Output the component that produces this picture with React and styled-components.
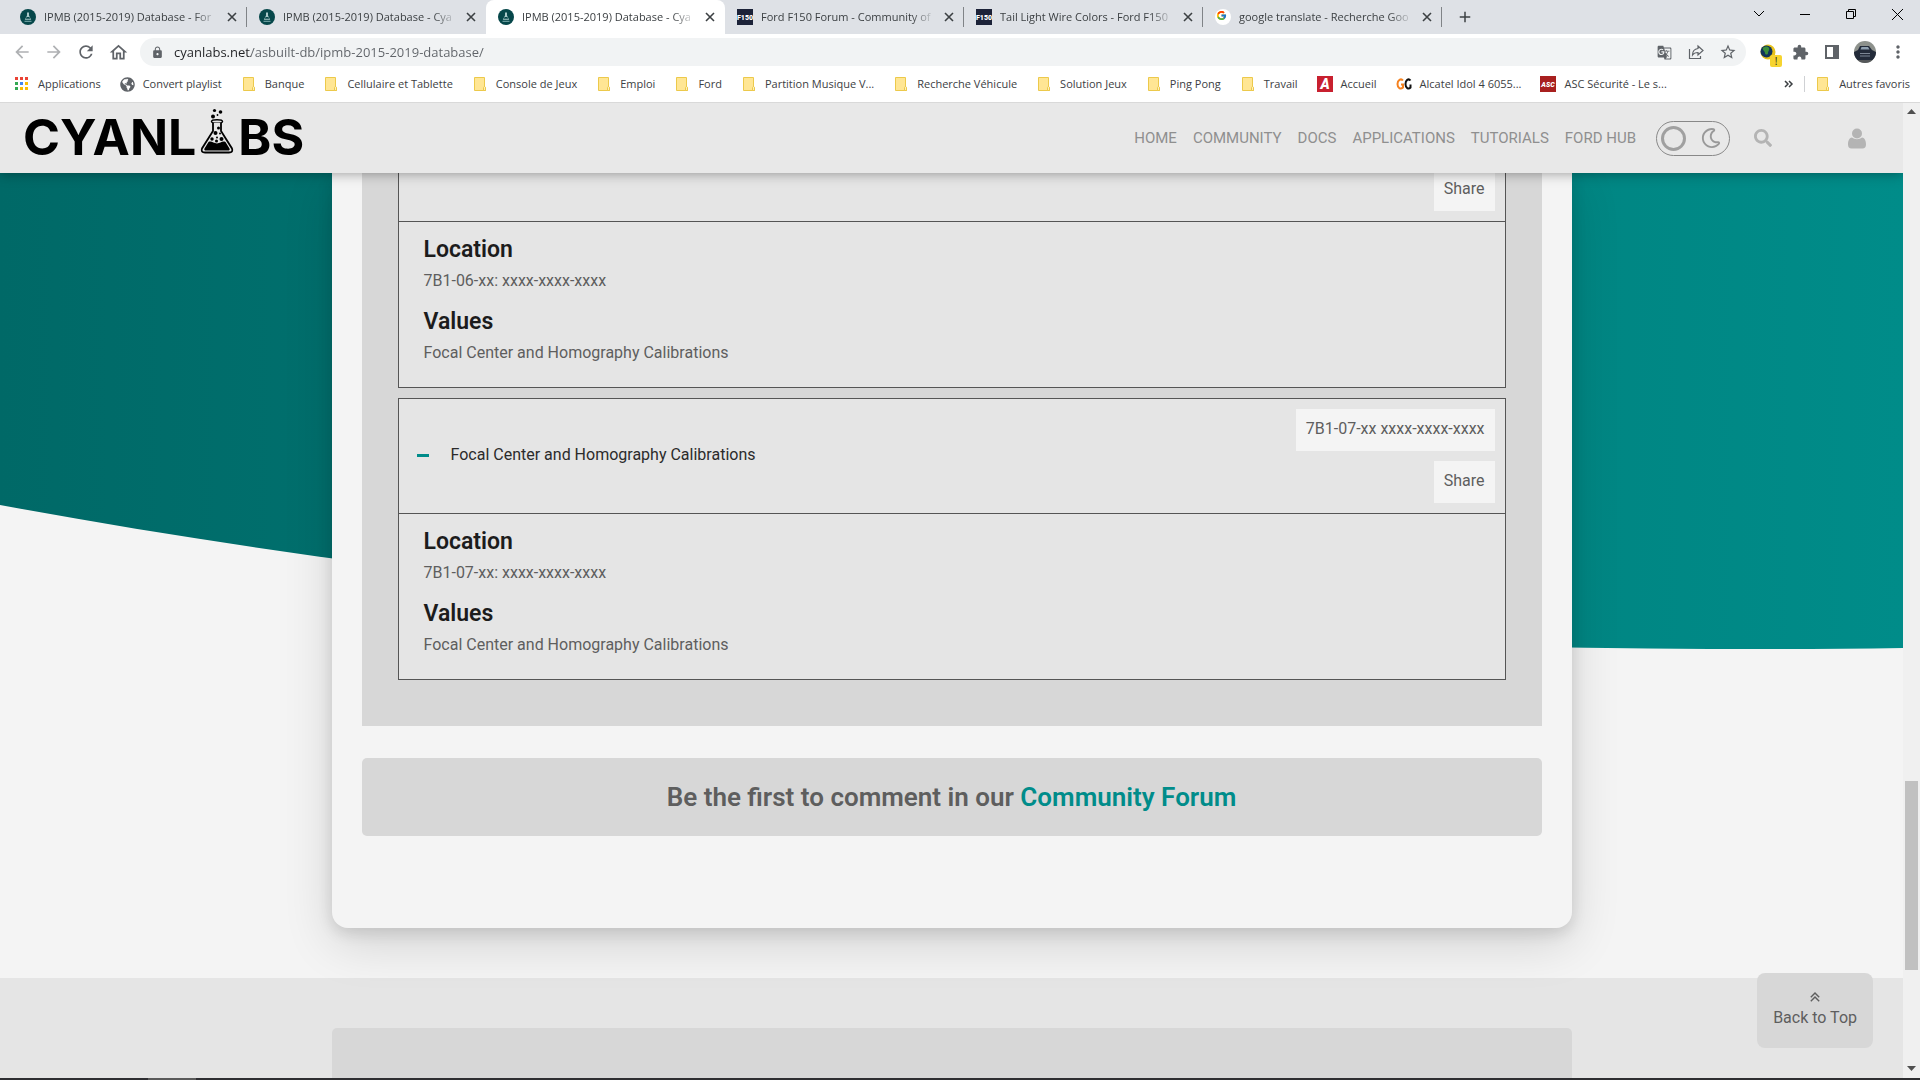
import React from "react";
import styled, { createGlobalStyle } from "styled-components";
import {
  MdArrowBack,
  MdArrowForward,
  MdRefresh,
  MdOutlineHome,
  MdLock,
  MdGTranslate,
  MdStarBorder,
  MdExtension,
  MdMoreVert,
  MdAdd,
} from "react-icons/md";
import { FaSearch, FaRegMoon, FaGlobeAmericas } from "react-icons/fa";
import { FcGoogle } from "react-icons/fc";

const GlobalStyle = createGlobalStyle`
  * {
    box-sizing: border-box;
  }

  body {
    margin: 0;
    font-family: Roboto, "Liberation Sans", sans-serif;
    font-size: 16px;
    line-height: 26px;
    color: #5e5e5e;
    background: #f4f4f4;
  }

  button {
    font: inherit;
    color: inherit;
    border: 0;
    padding: 0;
    background: none;
    cursor: pointer;
  }

  a {
    color: inherit;
    text-decoration: none;
  }

  svg {
    display: block;
    flex: none;
  }
`;

const Window = styled.div`
  display: flex;
  flex-direction: column;
  height: 100vh;
  overflow: hidden;
`;

/* browser chrome */

const Chrome = styled.div`
  font-family: "Segoe UI", "Open Sans", "Noto Sans", sans-serif;
  font-size: 11px;
  line-height: 16px;
  color: #3c4043;
  background: #fff;
  border-bottom: 1px solid #d9d9d9;
`;

const TabStrip = styled.div`
  display: flex;
  align-items: stretch;
  height: 34px;
  padding-left: 8px;
  background: #dee1e6;
`;

const TabItem = styled.div`
  display: flex;
  align-items: center;
  gap: 8px;
  flex: 0 1 239px;
  min-width: 0;
  padding: 0 9px 0 12px;
  border-radius: 8px 8px 0 0;
  background: ${(props) => (props.$active ? "#fff" : "transparent")};
`;

const TabTitle = styled.a`
  flex: 1;
  min-width: 0;
  overflow: hidden;
  white-space: nowrap;
  mask-image: linear-gradient(to left, transparent, #000 24px);
`;

const TabDivider = styled.span`
  align-self: center;
  width: 1px;
  height: 20px;
  margin-left: -1px;
  background: ${(props) => (props.$hidden ? "transparent" : "#808387")};
`;

const NewTab = styled.button`
  width: 46px;
  display: flex;
  align-items: center;
  justify-content: center;
`;

const WindowControls = styled.div`
  display: flex;
  margin-left: auto;
  padding-bottom: 6px;
`;

const WindowButton = styled.button`
  display: flex;
  align-items: center;
  justify-content: center;
  width: 46px;
  color: #000;
`;

const Toolbar = styled.div`
  display: flex;
  align-items: center;
  gap: 12px;
  padding: 4px 12px;
  color: #5f6368;
`;

const ToolButton = styled.button`
  display: flex;
  align-items: center;
  justify-content: center;
  position: relative;
  width: 20px;
  height: 20px;
  opacity: ${(props) => (props.$dim ? 0.5 : 1)};
`;

const AddressBar = styled.label`
  display: flex;
  align-items: center;
  gap: 10px;
  flex: 1;
  height: 28px;
  padding: 0 8px 0 11px;
  border-radius: 14px;
  background: #f1f3f4;
`;

const AddressActions = styled.div`
  display: flex;
  gap: 12px;
`;

const AddressInput = styled.input`
  flex: 1;
  min-width: 0;
  border: 0;
  padding: 0;
  outline: 0;
  font-family: inherit;
  font-size: 13px;
  line-height: 20px;
  color: transparent;
  background: linear-gradient(to right, #202124 77px, #5f6368 77px);
  background-clip: text;
`;

const WarnBadge = styled.span`
  position: absolute;
  right: -4px;
  bottom: -5px;
  width: 12px;
  border-radius: 2px;
  font-size: 10px;
  line-height: 12px;
  text-align: center;
  color: #202124;
  background: #f6d42f;
`;

const Avatar = styled.span`
  width: 22px;
  height: 22px;
  border-radius: 50%;
  overflow: hidden;
`;

const BookmarkBar = styled.nav`
  display: flex;
  align-items: center;
  gap: 19px;
  height: 28px;
  margin-bottom: 4px;
  padding: 0 10px 0 14px;
  white-space: nowrap;
`;

const Bookmark = styled.a`
  display: flex;
  align-items: center;
  gap: 8px;
`;

const BookmarkMore = styled.div`
  display: flex;
  align-items: center;
  gap: 10px;
  margin-left: auto;
`;

const BookmarkRule = styled.span`
  width: 1px;
  height: 16px;
  background: #cfd1d4;
`;

/* page */

const Viewport = styled.div`
  display: flex;
  flex: 1;
  min-height: 0;
`;

const Page = styled.div`
  display: flex;
  flex-direction: column;
  flex: 1;
  min-width: 0;
  position: relative;
  overflow: hidden;
`;

const SiteHeader = styled.header`
  display: flex;
  align-items: center;
  flex: none;
  height: 70px;
  padding: 0 37px 0 23px;
  background: #e8e8e8;
  box-shadow: 0 0 12px rgba(0, 0, 0, 0.4);
  z-index: 3;
`;

const Logo = styled.a`
  display: flex;
  align-items: flex-end;
  margin: 0 auto 14px 0;
  height: 46px;
  font-family: Inter, sans-serif;
  font-size: 50px;
  font-weight: 700;
  line-height: 34px;
  color: #000;

  svg {
    margin: 0 4px;
  }
`;

const SiteNav = styled.nav`
  display: flex;
  gap: 16px;
  margin-right: 20px;
  font-size: 15px;
  text-transform: uppercase;
  color: #8f8f8f;
`;

const ThemeSwitch = styled.button`
  display: flex;
  align-items: center;
  justify-content: space-between;
  width: 74px;
  height: 35px;
  padding: 0 8px 0 4px;
  border: 1px solid #888;
  border-radius: 18px;
  color: #999;
`;

const ThemeKnob = styled.span`
  width: 25px;
  height: 25px;
  border: 3px solid #a0a0a0;
  border-radius: 50%;
`;

const HeaderIcon = styled.button`
  margin-left: ${(props) => props.$gap}px;
  color: #b4b4b4;
`;

const Scroller = styled.div`
  display: flex;
  flex-direction: column;
  flex: 1;
  min-height: 0;
  overflow: hidden;
  position: relative;
`;

const Hero = styled.svg`
  position: absolute;
  top: 0;
  left: 0;
  width: 100%;
  height: 476px;
`;

const Card = styled.main`
  position: relative;
  z-index: 1;
  flex: none;
  width: 1240px;
  max-width: 100%;
  margin: 0 auto 50px;
  padding: 0 30px 92px;
  border-radius: 0 0 16px 16px;
  background: #f4f4f4;
  box-shadow: 0 5px 15px rgba(0, 0, 0, 0.12), 0 15px 50px rgba(0, 0, 0, 0.14);
`;

const Panel = styled.section`
  display: flex;
  flex-direction: column;
  gap: 10px;
  padding: 0 36px 46px;
  background: #d7d7d7;
`;

const Entry = styled.article`
  border: 1px solid #555;
  border-top-width: ${(props) => (props.$scrolled ? 0 : 1)}px;
  background: #e5e5e5;
`;

const EntryHead = styled.div`
  display: flex;
  align-items: ${(props) => (props.$scrolled ? "flex-end" : "center")};
  justify-content: ${(props) => (props.$scrolled ? "flex-end" : "space-between")};
  height: ${(props) => (props.$scrolled ? 49 : 115)}px;
  padding: ${(props) => (props.$scrolled ? "0 10px 10px" : "10px")};
  border-bottom: 1px solid #555;
  overflow: hidden;
`;

const EntryToggle = styled.button`
  display: flex;
  align-items: center;
  gap: 22px;
  padding: 0 0 2px 8px;
  color: #2b2b2b;

  svg {
    color: #008c8a;
  }
`;

const Chips = styled.div`
  display: flex;
  flex-direction: column;
  align-items: flex-end;
  gap: 10px;
`;

const Chip = styled.button`
  padding: 7px 10px 9px;
  background: #f4f4f4;
`;

const EntryBody = styled.div`
  padding: 15px 25px 21px;
`;

const EntryHeading = styled.h4`
  margin: 0 0 5px;
  font-size: 23px;
  font-weight: 600;
  line-height: 26px;
  color: #1c1c1c;

  p + & {
    margin-top: 15px;
  }
`;

const EntryText = styled.p`
  margin: 0;
`;

const CommentBox = styled.section`
  margin-top: 32px;
  padding: 24px;
  border-radius: 5px;
  font-size: 26px;
  font-weight: 600;
  line-height: 30px;
  text-align: center;
  background: #d7d7d7;

  a {
    color: #008c8a;
  }
`;

const SiteFooter = styled.footer`
  flex: 1;
  padding-top: 50px;
  background: #e5e5e5;
`;

const FooterBox = styled.div`
  width: 1240px;
  max-width: 100%;
  height: 100%;
  margin: 0 auto;
  border-radius: 5px 5px 0 0;
  background: #d7d7d7;
`;

const BackToTop = styled.a`
  position: absolute;
  right: 30px;
  bottom: 30px;
  z-index: 2;
  display: flex;
  flex-direction: column;
  align-items: center;
  gap: 3px;
  padding: 19px 16px 17px;
  border-radius: 8px;
  background: #d7d7d7;
`;

const Scrollbar = styled.div`
  display: flex;
  flex-direction: column;
  align-items: center;
  width: 17px;
  padding: 6px 0;
  color: #505050;
  background: #f0f0f0;
`;

const ScrollSpace = styled.div`
  flex: ${(props) => props.$grow};
`;

const ScrollThumb = styled.div`
  flex: 189;
  width: 13px;
  background: #c1c1c1;
`;

const Taskbar = styled.div`
  flex: none;
  height: 2px;
  padding-left: 148px;
  background: #2e2e31;
`;

const TaskbarActive = styled.div`
  width: 48px;
  height: 2px;
  background: #5a5a5a;
`;

const CyanIcon = () => (
  <svg width="16" height="16" viewBox="0 0 16 16">
    <circle cx="8" cy="8" r="8" fill="#06474a" />
    <path d="M7 3.500h2v3l2.200 4.200H4.800L7 6.500z" fill="#a9c9c9" />
    <path d="M6.600 8h2.800l.8 1.700H5.800z" fill="#06474a" />
    <path d="M4.500 12.300h7" stroke="#7fb0b0" strokeWidth="1" />
  </svg>
);

const BadgeIcon = ({ bg, fg = "#fff", size = 8, italic, children }) => (
  <svg width="16" height="16" viewBox="0 0 16 16">
    <rect width="16" height="16" fill={bg} />
    <text
      x="8"
      y={8 + size * 0.36}
      textAnchor="middle"
      fill={fg}
      fontFamily="Roboto, sans-serif"
      fontWeight="900"
      fontStyle={italic ? "italic" : "normal"}
      fontSize={size}
    >
      {children}
    </text>
  </svg>
);

const GoogleIcon = () => (
  <svg width="16" height="16" viewBox="0 0 16 16">
    <circle cx="8" cy="8" r="8" fill="#fff" />
    <FcGoogle x="1" y="1" width="14" height="14" />
  </svg>
);

const FolderIcon = () => (
  <svg width="16" height="16" viewBox="0 0 16 16">
    <path d="M2.500 1.500h10v9l1 1v3h-11z" fill="#ffe694" stroke="#ecc94b" />
    <path d="M11.500 14.500v-3l1-1.200 1 1.200v3z" fill="#fff0b8" stroke="#ecc94b" />
  </svg>
);

const AppsIcon = () => {
  const colors = ["#ea4335", "#ea4335", "#ea4335", "#34a853", "#4285f4", "#fbbc04", "#34a853", "#fbbc04", "#fbbc04"];
  return (
    <svg width="16" height="16" viewBox="0 0 16 16">
      {colors.map((fill, i) => (
        <rect key={i} x={1 + (i % 3) * 5} y={1 + Math.floor(i / 3) * 5} width="3" height="3" fill={fill} />
      ))}
    </svg>
  );
};

const TwinIcon = () => (
  <svg width="16" height="16" viewBox="0 0 16 16" fill="none" strokeWidth="2">
    <path d="M7 4.500C5 2 1.500 4 1.500 8s3 5.800 5.500 3.500V8.500H5" stroke="#f58220" />
    <path d="M14.500 4.500C12.500 2 9.500 4 9.500 8s3 5.800 5 3.500V8.500" stroke="#111" />
  </svg>
);

const UserIcon = () => (
  <svg width="18" height="21" viewBox="0 0 18 21" fill="currentColor">
    <circle cx="9" cy="5.500" r="5" />
    <path d="M4 9.500c3 2.300 7 2.300 10 0 3 .6 4 3.500 4 7 0 2.500-1.200 4-3.500 4h-11C1.200 20.500 0 19 0 16.500c0-3.500 1-6.400 4-7z" />
  </svg>
);

const DoubleUpIcon = () => (
  <svg width="10" height="10" viewBox="0 0 10 10" fill="none" stroke="currentColor" strokeWidth="1.400">
    <path d="M.8 5.200L5 1l4.200 4.200M.8 9.200L5 5l4.200 4.200" />
  </svg>
);

const Flask = () => (
  <svg width="34" height="46" viewBox="0 0 34 46">
    <circle cx="14.500" cy="2.500" r="1.600" />
    <circle cx="20.500" cy="4" r="1.800" />
    <circle cx="13" cy="8.500" r="2" />
    <circle cx="17.500" cy="7" r="0.900" />
    <ellipse cx="17" cy="13.500" rx="5.500" ry="1.700" fill="none" stroke="#000" strokeWidth="1.500" />
    <path
      d="M13 15v8L2 40.500c-1 2.500 0 4 3 4h24c3 0 4-1.500 3-4L21 23v-8"
      fill="#e8e8e8"
      stroke="#000"
      strokeWidth="1.800"
    />
    <path d="M8.500 34c3-1.500 5 1.500 8.500 1.500s5-3 8.500-1.500l4 6.500c.6 1.500 0 2-1.500 2H6c-1.500 0-2.100-.5-1.500-2z" />
    <circle cx="18.500" cy="20" r="1.500" />
    <circle cx="15.500" cy="25" r="2" />
    <circle cx="20" cy="25.500" r="1" />
    <circle cx="12" cy="31" r="1.700" />
    <circle cx="21.500" cy="31" r="2" />
    <circle cx="17" cy="29.500" r="1" />
    <circle cx="16.500" cy="33" r="1.500" />
  </svg>
);

const tabs = [
  { title: "IPMB (2015-2019) Database - For", icon: <CyanIcon /> },
  { title: "IPMB (2015-2019) Database - Cya", icon: <CyanIcon /> },
  { title: "IPMB (2015-2019) Database - Cya", icon: <CyanIcon />, active: true },
  { title: "Ford F150 Forum - Community of", icon: <BadgeIcon bg="#1c2238" size={7}>F150</BadgeIcon> },
  { title: "Tail Light Wire Colors - Ford F150", icon: <BadgeIcon bg="#1c2238" size={7}>F150</BadgeIcon> },
  { title: "google translate - Recherche Goo", icon: <GoogleIcon /> },
];

const bookmarks = [
  { label: "Applications", icon: <AppsIcon /> },
  { label: "Convert playlist", icon: <FaGlobeAmericas size={15} color="#5f6368" /> },
  { label: "Banque" },
  { label: "Cellulaire et Tablette" },
  { label: "Console de Jeux" },
  { label: "Emploi" },
  { label: "Ford" },
  { label: "Partition Musique V..." },
  { label: "Recherche Véhicule" },
  { label: "Solution Jeux" },
  { label: "Ping Pong" },
  { label: "Travail" },
  { label: "Accueil", icon: <BadgeIcon bg="#c8202f" size={14} italic>A</BadgeIcon> },
  { label: "Alcatel Idol 4 6055...", icon: <TwinIcon /> },
  { label: "ASC Sécurité - Le s...", icon: <BadgeIcon bg="#a8201f" size={7} italic>ASC</BadgeIcon> },
];

const navItems = ["Home", "Community", "Docs", "Applications", "Tutorials", "Ford Hub"];

const entries = [
  { code: "7B1-06-xx", scrolled: true },
  { code: "7B1-07-xx" },
];

const BrowserChrome = () => (
  <Chrome>
    <TabStrip>
      {tabs.map((tab, i) => (
        <React.Fragment key={i}>
          <TabItem $active={tab.active}>
            {tab.icon}
            <TabTitle href="#">{tab.title}</TabTitle>
            <button aria-label="Close tab">
              <svg width="12" height="12" stroke="currentColor" strokeWidth="1.600"><path d="M2 2l8 8M10 2l-8 8" /></svg>
            </button>
          </TabItem>
          <TabDivider $hidden={i === 1 || i === 2} />
        </React.Fragment>
      ))}
      <NewTab aria-label="New tab">
        <MdAdd size={18} />
      </NewTab>
      <WindowControls>
        <WindowButton aria-label="Search tabs">
          <svg width="12" height="12" fill="none" stroke="currentColor"><path d="M1 3l5 5 5-5" /></svg>
        </WindowButton>
        <WindowButton aria-label="Minimize">
          <svg width="10" height="10" stroke="currentColor"><path d="M0 5.500h10" /></svg>
        </WindowButton>
        <WindowButton aria-label="Restore">
          <svg width="10" height="10" fill="none" stroke="currentColor"><path d="M.5 2.500h7v7h-7zM2.500 2.500v-2h7v7h-2" /></svg>
        </WindowButton>
        <WindowButton aria-label="Close">
          <svg width="11" height="11" stroke="currentColor"><path d="M0 0l11 11M11 0L0 11" /></svg>
        </WindowButton>
      </WindowControls>
    </TabStrip>
    <Toolbar>
      <ToolButton aria-label="Back" $dim><MdArrowBack size={20} /></ToolButton>
      <ToolButton aria-label="Forward" $dim><MdArrowForward size={20} /></ToolButton>
      <ToolButton aria-label="Reload"><MdRefresh size={20} /></ToolButton>
      <ToolButton aria-label="Home"><MdOutlineHome size={21} /></ToolButton>
      <AddressBar>
        <MdLock size={13} />
        <AddressInput aria-label="Address" defaultValue="cyanlabs.net/asbuilt-db/ipmb-2015-2019-database/" />
        <AddressActions>
          <ToolButton aria-label="Translate"><MdGTranslate size={15} /></ToolButton>
          <ToolButton aria-label="Share page">
            <svg width="16" height="16" viewBox="0 0 16 16" fill="none" stroke="currentColor" strokeWidth="1.200">
              <path d="M1.500 5v9.500h11V12M10 2l5 4.500-5 4.500V8.500c-3 0-4.500 1-5.500 2.500 0-3.500 2-6 5.500-6.500z" />
            </svg>
          </ToolButton>
          <ToolButton aria-label="Bookmark"><MdStarBorder size={18} /></ToolButton>
        </AddressActions>
      </AddressBar>
      <ToolButton aria-label="Downloader">
        <svg width="16" height="16" viewBox="0 0 16 16">
          <circle cx="8" cy="8" r="7.500" fill="#e7c21c" />
          <circle cx="6.500" cy="7.500" r="6" fill="#12345a" />
          <path d="M3 4c2-2 5-2 6 0s-1 3-1 5-3 2-3 0-3-3-2-5z" fill="#3b8f3a" />
        </svg>
        <WarnBadge>!</WarnBadge>
      </ToolButton>
      <ToolButton aria-label="Extensions"><MdExtension size={17} /></ToolButton>
      <ToolButton aria-label="Side panel">
        <svg width="14" height="14" viewBox="0 0 14 14"><path d="M0 0h14v14H0zM2 2v10h6V2z" fill="currentColor" fillRule="evenodd" /></svg>
      </ToolButton>
      <Avatar>
        <svg width="22" height="22" viewBox="0 0 22 22">
          <rect width="22" height="22" fill="#8d918c" />
          <path d="M0 11l4-2 2-4h9l3 4 4 2v6l-3 2H2l-2-2z" fill="#232b3a" />
          <path d="M6.500 8.500l1-2.500h6.500l1.500 2.500z" fill="#8fa0b0" />
          <path d="M6 12.500h10M6 15h10" stroke="#7d8795" />
          <path d="M0 19h22v3H0z" fill="#55585a" />
        </svg>
      </Avatar>
      <ToolButton aria-label="Menu"><MdMoreVert size={20} /></ToolButton>
    </Toolbar>
    <BookmarkBar>
      {bookmarks.map((item) => (
        <Bookmark href="#" key={item.label}>
          {item.icon || <FolderIcon />}
          {item.label}
        </Bookmark>
      ))}
      <BookmarkMore>
        <button aria-label="More bookmarks">
          <svg width="10" height="8" fill="none" stroke="currentColor" strokeWidth="1.500"><path d="M1 1l3 3-3 3M5 1l3 3-3 3" /></svg>
        </button>
        <BookmarkRule />
        <Bookmark href="#"><FolderIcon />Autres favoris</Bookmark>
      </BookmarkMore>
    </BookmarkBar>
  </Chrome>
);

const AccordionEntry = ({ code, scrolled }) => (
  <Entry $scrolled={scrolled}>
    <EntryHead $scrolled={scrolled}>
      {!scrolled && (
        <EntryToggle>
          <svg width="12" height="3"><rect width="12" height="3" fill="currentColor" /></svg>
          Focal Center and Homography Calibrations
        </EntryToggle>
      )}
      <Chips>
        {!scrolled && <Chip>{code} xxxx-xxxx-xxxx</Chip>}
        <Chip>Share</Chip>
      </Chips>
    </EntryHead>
    <EntryBody>
      <EntryHeading>Location</EntryHeading>
      <EntryText>{code}: xxxx-xxxx-xxxx</EntryText>
      <EntryHeading>Values</EntryHeading>
      <EntryText>Focal Center and Homography Calibrations</EntryText>
    </EntryBody>
  </Entry>
);

export default function App() {
  return (
    <Window>
      <GlobalStyle />
      <BrowserChrome />
      <Viewport>
        <Page>
          <SiteHeader>
            <Logo href="#" aria-label="CyanLabs">
              CYANL
              <Flask />
              BS
            </Logo>
            <SiteNav>
              {navItems.map((item) => (
                <a href="#" key={item}>{item}</a>
              ))}
            </SiteNav>
            <ThemeSwitch aria-label="Toggle dark mode">
              <ThemeKnob />
              <FaRegMoon size={20} />
            </ThemeSwitch>
            <HeaderIcon aria-label="Search" $gap={24}><FaSearch size={18} /></HeaderIcon>
            <HeaderIcon aria-label="Account" $gap={76}><UserIcon /></HeaderIcon>
          </SiteHeader>
          <Scroller>
            <Hero viewBox="0 0 1903 476" preserveAspectRatio="none">
              <defs>
                <linearGradient id="hero" x1="0" x2="1">
                  <stop offset="0" stopColor="#006967" />
                  <stop offset="1" stopColor="#008c89" />
                </linearGradient>
              </defs>
              <path d="M0 0H1903V475Q1840 476 1770 476C1220 476 590 441 0 332z" fill="url(#hero)" />
            </Hero>
            <Card>
              <Panel>
                {entries.map((entry) => (
                  <AccordionEntry key={entry.code} {...entry} />
                ))}
              </Panel>
              <CommentBox>
                Be the first to comment in our <a href="#">Community Forum</a>
              </CommentBox>
            </Card>
            <SiteFooter>
              <FooterBox />
            </SiteFooter>
          </Scroller>
          <BackToTop href="#">
            <DoubleUpIcon />
            Back to Top
          </BackToTop>
        </Page>
        <Scrollbar>
          <svg width="9" height="6"><path d="M0 5l4.500-5L9 5z" fill="currentColor" /></svg>
          <ScrollSpace $grow={666} />
          <ScrollThumb />
          <ScrollSpace $grow={96} />
          <svg width="9" height="6"><path d="M0 0l4.500 5L9 0z" fill="currentColor" /></svg>
        </Scrollbar>
      </Viewport>
      <Taskbar>
        <TaskbarActive />
      </Taskbar>
    </Window>
  );
}
